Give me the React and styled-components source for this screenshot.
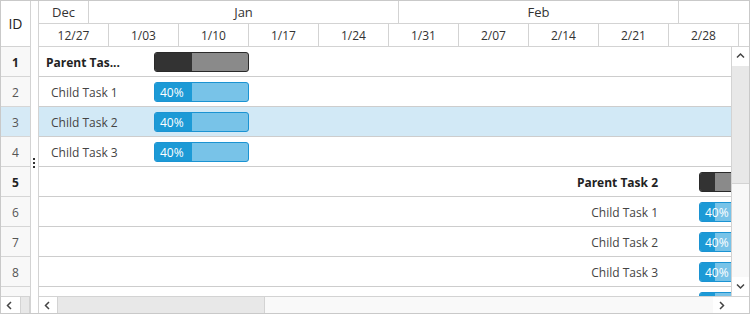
import React from "react";
import styled, { createGlobalStyle } from "styled-components";

const GlobalStyle = createGlobalStyle`
  html, body { margin: 0; padding: 0; background: #fff; }
  body { font-family: "Open Sans", "Noto Sans", sans-serif; }
`;

const DAY = 10;

const months = [
  { label: "Dec", days: 5 },
  { label: "Jan", days: 31 },
  { label: "Feb", days: 28 },
  { label: "", days: 10 },
];

const weeks = ["12/27", "1/03", "1/10", "1/17", "1/24", "1/31", "2/07", "2/14", "2/21", "2/28", ""];

// left labels sit at a fixed indent, right labels end this far from the viewport edge
const rows = [
  { id: 1, name: "Parent Tas...", parent: true, side: "left", start: 115, width: 95 },
  { id: 2, name: "Child Task 1", side: "left", start: 115, width: 95 },
  { id: 3, name: "Child Task 2", side: "left", start: 115, width: 95, selected: true },
  { id: 4, name: "Child Task 3", side: "left", start: 115, width: 95 },
  { id: 5, name: "Parent Task 2", parent: true, side: "right", start: 660, width: 40 },
  { id: 6, name: "Child Task 1", side: "right", start: 660, width: 40 },
  { id: 7, name: "Child Task 2", side: "right", start: 660, width: 40 },
  { id: 8, name: "Child Task 3", side: "right", start: 660, width: 40 },
  { id: 9, name: "", side: "right", start: 660, width: 40 },
];

const Frame = styled.div`
  width: 750px;
  height: 314px;
  box-sizing: border-box;
  border: 1px solid #c9c9c9;
  display: flex;
  overflow: hidden;
  background: #fff;
  color: #333;
  font-size: 12px;
`;

const IdPane = styled.div`
  width: 30px;
  flex: none;
  box-sizing: border-box;
  border-right: 1px solid #d3d3d3;
  display: flex;
  flex-direction: column;
`;

const IdHeader = styled.div`
  height: 46px;
  flex: none;
  box-sizing: border-box;
  border-bottom: 1px solid #d3d3d3;
  display: flex;
  align-items: center;
  justify-content: center;
  font-size: 14px;
  color: #222;
`;

const IdBody = styled.div`
  flex: 1;
  overflow: hidden;
`;

const IdCell = styled.div`
  height: 30px;
  box-sizing: border-box;
  border-bottom: 1px solid #d6d6d6;
  display: flex;
  align-items: center;
  justify-content: center;
  padding-top: 1px;
  background: ${({ $selected }) => ($selected ? "#d6eaf6" : "#f8f8f8")};
  font-weight: ${({ $bold }) => ($bold ? 700 : 400)};
  color: ${({ $bold }) => ($bold ? "#222" : "#555")};
`;

const Splitter = styled.div`
  width: 8px;
  flex: none;
  box-sizing: border-box;
  border-right: 1px solid #d3d3d3;
  display: flex;
  flex-direction: column;
  align-items: center;
  justify-content: center;
  gap: 2px;
  padding: 12px 1px 0 0;
`;

const Dot = styled.span`
  width: 2px;
  height: 2px;
  background: #333;
`;

const ChartPane = styled.div`
  flex: 1;
  min-width: 0;
  display: flex;
  flex-direction: column;
`;

const HeaderRow = styled.div`
  display: flex;
  height: 23px;
  flex: none;
  box-sizing: border-box;
  border-bottom: 1px solid #d3d3d3;
  overflow: hidden;
`;

const HeaderCell = styled.div`
  flex: none;
  width: ${({ $w }) => $w}px;
  box-sizing: border-box;
  border-right: 1px solid #d3d3d3;
  display: flex;
  align-items: center;
  justify-content: center;
  font-size: ${({ $big }) => ($big ? 13 : 12)}px;
  color: #333;
`;

const ChartBody = styled.div`
  flex: 1;
  display: flex;
  min-height: 0;
`;

const Viewport = styled.div`
  flex: 1;
  overflow: hidden;
  position: relative;
`;

const TaskRow = styled.div`
  height: 30px;
  box-sizing: border-box;
  border-bottom: 1px solid #cdcdcd;
  position: relative;
  background: ${({ $selected }) => ($selected ? "#d2e9f6" : "#fff")};
`;

const Label = styled.div`
  position: absolute;
  top: 1px;
  height: 29px;
  display: flex;
  align-items: center;
  white-space: nowrap;
  font-weight: ${({ $bold }) => ($bold ? 700 : 400)};
  color: ${({ $bold }) => ($bold ? "#222" : "#444")};
`;

const Bar = styled.div`
  position: absolute;
  top: 5px;
  height: 20px;
  box-sizing: border-box;
  border-radius: 3px;
  overflow: hidden;
  display: flex;
  border: 1px solid ${({ $parent }) => ($parent ? "#2a2a2a" : "#1b93d2")};
  background: ${({ $parent }) => ($parent ? "#8a8a8a" : "#78c3e8")};
`;

const Progress = styled.div`
  width: 40%;
  flex: none;
  background: ${({ $parent }) => ($parent ? "#333" : "#1c9ad6")};
`;

const BarText = styled.span`
  position: absolute;
  left: 5px;
  top: 1px;
  line-height: 18px;
  color: #fff;
  font-size: 12px;
`;

const VScroll = styled.div`
  width: 18px;
  flex: none;
  box-sizing: border-box;
  border-left: 1px solid #d3d3d3;
  background: #f8f8f8;
  display: flex;
  flex-direction: column;
`;

const HScroll = styled.div`
  height: 17px;
  flex: none;
  box-sizing: border-box;
  border-top: 1px solid #d3d3d3;
  background: #f9f9f9;
  display: flex;
`;

const ArrowBtn = styled.div`
  width: ${({ $w }) => $w || 18}px;
  height: ${({ $h }) => $h || 16}px;
  flex: none;
  display: flex;
  align-items: center;
  justify-content: center;
  background: #fff;
  box-sizing: border-box;
`;

const Thumb = styled.div`
  background: #e8e8e8;
  box-sizing: border-box;
  flex: none;
  ${({ $vertical, $size }) =>
    $vertical
      ? `height: ${$size}px; border-bottom: 1px solid #d3d3d3;`
      : `width: ${$size}px; border-right: 1px solid #d3d3d3; border-left: 1px solid #d3d3d3;`}
`;

const Track = styled.div`
  flex: 1;
`;

const Corner = styled.div`
  width: 18px;
  flex: none;
  background: #fff;
`;

const Chevron = ({ dir }) => {
  const d = {
    left: "M5 1 L1.5 4.5 L5 8",
    right: "M2 1 L5.5 4.5 L2 8",
    up: "M1 5.5 L4.5 2 L8 5.5",
    down: "M1 2.5 L4.5 6 L8 2.5",
  }[dir];
  return (
    <svg width="9" height="9" viewBox="0 0 9 9">
      <path d={d} fill="none" stroke="#444" strokeWidth="1.5" />
    </svg>
  );
};

export default function App() {
  return (
    <>
      <GlobalStyle />
      <Frame>
        <IdPane>
          <IdHeader>ID</IdHeader>
          <IdBody>
            {rows.map((r) => (
              <IdCell key={r.id} $bold={r.parent} $selected={r.selected}>
                {r.id}
              </IdCell>
            ))}
          </IdBody>
          <HScroll>
            <ArrowBtn $w={19}>
              <Chevron dir="left" />
            </ArrowBtn>
            <Thumb $size={10} />
          </HScroll>
        </IdPane>

        <Splitter>
          <Dot />
          <Dot />
          <Dot />
        </Splitter>

        <ChartPane>
          <HeaderRow>
            {months.map((m, i) => (
              <HeaderCell key={i} $w={m.days * DAY} $big>
                {m.label}
              </HeaderCell>
            ))}
          </HeaderRow>
          <HeaderRow>
            {weeks.map((w, i) => (
              <HeaderCell key={i} $w={70}>
                {w}
              </HeaderCell>
            ))}
          </HeaderRow>
          <ChartBody>
            <Viewport>
              {rows.map((r) => (
                <TaskRow key={r.id} $selected={r.selected}>
                  {r.name &&
                    (r.side === "left" ? (
                      <Label $bold={r.parent} style={{ left: r.parent ? 7 : 12 }}>
                        {r.name}
                      </Label>
                    ) : (
                      <Label $bold={r.parent} style={{ right: 73 }}>
                        {r.name}
                      </Label>
                    ))}
                  <Bar $parent={r.parent} style={{ left: r.start, width: r.width }}>
                    <Progress $parent={r.parent} />
                    {!r.parent && <BarText>40%</BarText>}
                  </Bar>
                </TaskRow>
              ))}
            </Viewport>
            <VScroll>
              <ArrowBtn $w={17} $h={19}>
                <Chevron dir="up" />
              </ArrowBtn>
              <Thumb $vertical $size={118} />
              <Track />
              <ArrowBtn $w={17} $h={19}>
                <Chevron dir="down" />
              </ArrowBtn>
            </VScroll>
          </ChartBody>
          <HScroll>
            <ArrowBtn>
              <Chevron dir="left" />
            </ArrowBtn>
            <Thumb $size={208} />
            <Track />
            <ArrowBtn>
              <Chevron dir="right" />
            </ArrowBtn>
            <Corner />
          </HScroll>
        </ChartPane>
      </Frame>
    </>
  );
}
